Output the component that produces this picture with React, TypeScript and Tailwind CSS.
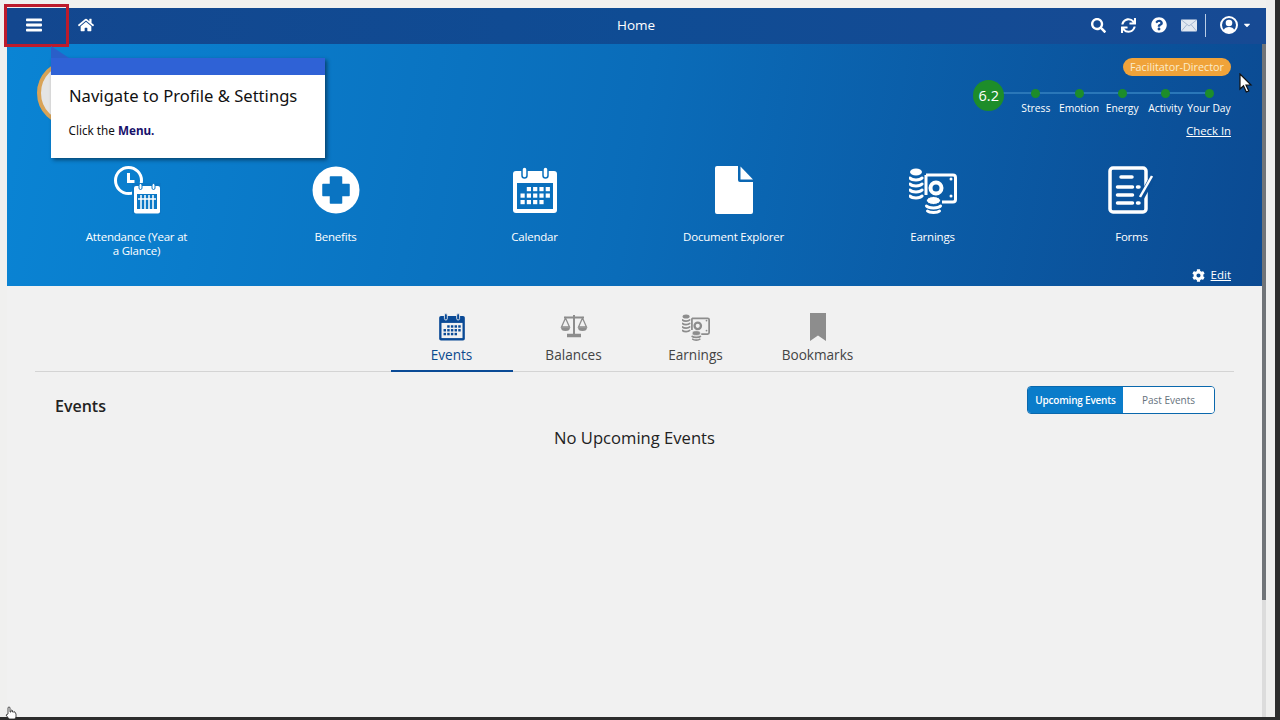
import React from "react";
import { FaHome, FaSearch, FaSync, FaQuestionCircle, FaCog, FaCaretDown } from "react-icons/fa";

const AttendanceIcon = () => (
  <svg width="48" height="48" viewBox="0 0 48 48" fill="none">
    <circle cx="15.500" cy="14.500" r="13" stroke="#fff" strokeWidth="3" />
    <path d="M15.500 7v8.500h6" stroke="#fff" strokeWidth="3" />
    <rect x="19" y="17" width="31" height="32" fill="#0b78c6" />
    <rect x="21" y="20" width="26" height="27.500" rx="2" fill="#fff" />
    <rect x="26" y="17.500" width="3" height="6" rx="1.500" fill="#fff" stroke="#0b78c6" />
    <rect x="39" y="17.500" width="3" height="6" rx="1.500" fill="#fff" stroke="#0b78c6" />
    <path d="M24 28h20v15H24z" fill="#0b78c6" />
    <path d="M25 33h18M28 29v14M32 29v14M36 29v14M40 29v14" stroke="#fff" strokeWidth="1.500" />
  </svg>
);
const BenefitsIcon = () => (
  <svg width="48" height="48" viewBox="0 0 48 48">
    <circle cx="24" cy="24" r="23.500" fill="#fff" />
    <path d="M18.500 11h11v7.500H37v11h-7.500V37h-11v-7.500H11v-11h7.500z" fill="#0a74c2" strokeLinejoin="round" stroke="#0a74c2" strokeWidth="1.500" />
  </svg>
);
const CalendarIcon = ({ fg = "#fff", bg = "#0a70bd", size = 48 }: { fg?: string; bg?: string; size?: number }) => (
  <svg width={size} height={size} viewBox="0 0 48 48">
    <rect x="2" y="5" width="44" height="42" rx="3" fill={fg} />
    <rect x="11" y="1" width="5" height="11" rx="2.500" fill={fg} stroke={bg} strokeWidth="1.500" />
    <rect x="32" y="1" width="5" height="11" rx="2.500" fill={fg} stroke={bg} strokeWidth="1.500" />
    <rect x="6" y="17" width="36" height="26" fill={bg} />
    {[0, 1, 2].map((r) =>
      [0, 1, 2, 3, 4].map((c) =>
        r === 0 && c === 0 ? null : r === 2 && c === 4 ? null : (
          <rect key={`${r}${c}`} x={9.500 + c * 6.300} y={21 + r * 6.500} width="4.200" height="4.200" fill={fg} />
        )
      )
    )}
  </svg>
);
const DocIcon = () => (
  <svg width="38" height="48" viewBox="0 0 38 48">
    <path d="M2 0h21v14a2 2 0 0 0 2 2h13v30a2 2 0 0 1-2 2H2a2 2 0 0 1-2-2V2a2 2 0 0 1 2-2z" fill="#fff" />
    <path d="M25.500 0.500 38 13.500H25.500z" fill="#fff" />
  </svg>
);
const EarningsIcon = ({ c = "#fff", bg = "#0a5aa6", w = 48 }: { c?: string; bg?: string; w?: number }) => (
  <svg width={w} height={w} viewBox="0 0 48 48" fill="none">
    <ellipse cx="7" cy="6" rx="6" ry="3.500" fill={c} />
    <path d="M1 12c2 2.500 10 2.500 12 0M1 18c2 2.500 10 2.500 12 0M1 24c2 2.500 10 2.500 12 0M1 30c2 2.500 10 2.500 12 0" stroke={c} strokeWidth="3" strokeLinecap="round" />
    <path d="M17 9h27a2.500 2.500 0 0 1 2.500 2.500v22a2.500 2.500 0 0 1-2.500 2.500h-11" stroke={c} strokeWidth="3" />
    <path d="M17 9v20" stroke={c} strokeWidth="3" />
    <circle cx="27" cy="22" r="5.500" stroke={c} strokeWidth="4" />
    <circle cx="42" cy="13" r="1.500" fill={c} />
    <circle cx="42" cy="30" r="1.500" fill={c} />
    <ellipse cx="24.500" cy="34.500" rx="7" ry="4" fill={c} stroke={bg} strokeWidth="1" />
    <path d="M17.500 40c2 2.500 12 2.500 14 0M18.500 45c2 2 10 2 12 0" stroke={c} strokeWidth="3" strokeLinecap="round" />
  </svg>
);
const FormsIcon = () => (
  <svg width="48" height="48" viewBox="0 0 48 48" fill="none">
    <rect x="2" y="2" width="36" height="44" rx="3" stroke="#fff" strokeWidth="3.500" />
    <path d="M13 11h11M9.500 21h15M9.500 29h15M9.500 37h15" stroke="#fff" strokeWidth="3.500" strokeLinecap="round" />
    <path d="M29.500 21h1.500M29.500 37h1.500" stroke="#fff" strokeWidth="3.500" strokeLinecap="round" />
    <path d="M33 32 46 9" stroke="#0a4f98" strokeWidth="6" />
    <path d="M32 31 44 10" stroke="#fff" strokeWidth="2.500" />
  </svg>
);
const ScaleIcon = () => (
  <svg width="28" height="26" viewBox="0 0 28 26" fill="none" stroke="#8d8d8d">
    <path d="M14 1v21M4 3.500h20" strokeWidth="2" />
    <path d="M7 21.500h14" strokeWidth="3.500" />
    <path d="M5.500 4 1.500 13h8zM22.500 4l-4 9h8z" strokeWidth="1.300" />
    <path d="M1 13.500a4.500 3.500 0 0 0 9 0zM18 13.500a4.500 3.500 0 0 0 9 0z" fill="#8d8d8d" stroke="none" />
  </svg>
);
const MailIcon = () => (
  <svg width="16" height="13" viewBox="0 0 16 13">
    <rect width="16" height="12" y="0.500" rx="1" fill="#e2e8f1" />
    <path d="M0.500 1 8 7l7.500-6M0.500 12 6 5.500M15.500 12 10 5.500" fill="none" stroke="#9fb2cf" strokeWidth="0.900" />
  </svg>
);
const UserIcon = () => (
  <svg width="18" height="18" viewBox="0 0 18 18">
    <circle cx="9" cy="9" r="8" fill="none" stroke="#fff" strokeWidth="2" />
    <circle cx="9" cy="7" r="3.300" fill="#fff" />
    <path d="M3.500 14.500c1-2.800 3-3.500 5.500-3.500s4.500.7 5.500 3.500a8 8 0 0 1-11 0z" fill="#fff" />
  </svg>
);

const shortcuts = [
  { label: "Attendance (Year at a Glance)", icon: <AttendanceIcon /> },
  { label: "Benefits", icon: <BenefitsIcon /> },
  { label: "Calendar", icon: <CalendarIcon /> },
  { label: "Document Explorer", icon: <DocIcon /> },
  { label: "Earnings", icon: <EarningsIcon /> },
  { label: "Forms", icon: <FormsIcon /> },
];

const steps = ["Stress", "Emotion", "Energy", "Activity", "Your Day"];

const tabs = [
  { label: "Events", active: true, icon: <CalendarIcon fg="#0a4a96" bg="#f1f1f1" size={28} /> },
  { label: "Balances", icon: <ScaleIcon /> },
  { label: "Earnings", icon: <EarningsIcon c="#8d8d8d" bg="#f1f1f1" w={28} /> },
  {
    label: "Bookmarks",
    icon: (
      <svg width="16" height="28" viewBox="0 0 16 28">
        <path d="M0 0h16v28l-8-5.500L0 28z" fill="#8d8d8d" />
      </svg>
    ),
  },
];

const Arrow = () => (
  <svg width="14" height="20" viewBox="0 0 14 20">
    <path d="M1 1v15l3.500-3.300L7.300 19l2.500-1-2.800-6h5z" fill="#fff" stroke="#111" strokeWidth="1.200" />
  </svg>
);

export default function App() {
  return (
    <div className="w-[1280px] h-[720px] overflow-hidden flex flex-col bg-[#f0f0ef] text-[#222] font-['Open_Sans','Noto_Sans',sans-serif]">
      <div className="h-[717px] flex">
        <div className="w-[7px] shrink-0 bg-[#f0f0ef]" />
        <div className="w-[1259px] shrink-0 flex flex-col relative">
          <div className="h-[8px] shrink-0 bg-[#f1f1ef]" />
          {/* top bar */}
          <header className="h-[36px] shrink-0 bg-gradient-to-r from-[#13478f] via-[#0f4c94] to-[#174a94] flex items-center pb-[2px] text-white relative">
            <div className="w-[54px] flex justify-center">
              <svg width="16" height="14" viewBox="0 0 16 14" fill="#fff">
                <rect y="0.500" width="16" height="2.800" rx="0.800" />
                <rect y="5.600" width="16" height="2.800" rx="0.800" />
                <rect y="10.700" width="16" height="2.800" rx="0.800" />
              </svg>
            </div>
            <FaHome className="ml-[17px] text-[16px]" />
            <div className="absolute left-[610px] top-[8px] text-[13.500px] leading-[18px] font-medium">Home</div>
            <div className="ml-auto flex items-center pr-[14px]">
              <FaSearch className="text-[15px] mr-[15px]" />
              <FaSync className="text-[15px] mr-[15px]" />
              <FaQuestionCircle className="text-[16px] mr-[14px]" />
              <div className="mr-[8px]"><MailIcon /></div>
              <div className="w-px h-[23px] bg-[#b9cde6] mr-[14px]" />
              <div className="mr-[4px]"><UserIcon /></div>
              <FaCaretDown className="text-[10px]" />
            </div>
          </header>

          {/* hero */}
          <section className="h-[242px] shrink-0 bg-[linear-gradient(100deg,#0a84d4,#0a6cb9_50%,#0b4a92)] text-white flex flex-col px-[30px] pt-[14px] relative">
            <div className="flex flex-col items-end h-[107px] pr-[5px]">
              <div className="h-[18px] rounded-full bg-[#f0a33a] px-[7px] text-[10.800px] leading-[18px] text-[#fbeccb]">
                Facilitator-Director
              </div>
              <div className="relative flex items-start mt-[3px] h-[36px]">
                <div className="absolute left-[30px] right-[20px] top-[13px] h-[2px] bg-[#2a77b8]" />
                <div className="relative w-[31px] h-[31px] mt-[1px] rounded-full bg-[#1d8d2a] text-[14.500px] leading-[31px] text-center mr-[10px]">
                  6.2
                </div>
                {steps.map((s, i) => (
                  <div key={s} className={`relative flex flex-col items-center ${i === 4 ? "w-[44px]" : "w-[43.200px]"}`}>
                    <div className="w-[9px] h-[9px] rounded-full bg-[#1d8d2a] mt-[9.500px]" />
                    <div className="text-[10.300px] leading-[14px] mt-[3.500px] whitespace-nowrap">{s}</div>
                  </div>
                ))}
              </div>
              <a className="text-[11.300px] leading-[16px] underline mt-[8px]">Check In</a>
            </div>

            <div className="grid grid-cols-6 w-[1194px] h-[93px]">
              {shortcuts.map((s) => (
                <div key={s.label} className="flex flex-col items-center">
                  <div className="h-[48px] mt-[1px] flex items-center justify-center">{s.icon}</div>
                  <div className="mt-[16px] w-[110px] text-center text-[11.500px] tracking-[-0.200px] leading-[14px] whitespace-normal">{s.label}</div>
                </div>
              ))}
            </div>
            <div className="flex justify-end items-center pr-[5px] mt-[9px]">
              <FaCog className="text-[13px] mr-[6px]" />
              <a className="text-[11.500px] leading-[16px] underline">Edit</a>
            </div>
            {/* avatar peeking out behind the tooltip */}
            <div className="absolute left-[30px] top-[16px] w-[66px] h-[66px] rounded-full bg-[#e4e4e4] border-[4px] border-[#d9a357]" />
          </section>

          {/* content */}
          <main className="flex-1 bg-[#f1f1f1] px-[28px]">
            <div className="mt-[27px] h-[59px] border-b border-[#d4d4d4] flex justify-center w-[1199px]">
              {tabs.map((t) => (
                <div
                  key={t.label}
                  className={`w-[122px] h-[59px] flex flex-col items-center ${t.active ? "border-b-2 border-[#0a4a96]" : ""}`}
                >
                  <div className="h-[28px] flex items-center justify-center">{t.icon}</div>
                  <div className={`mt-[4px] text-[13.600px] leading-[20px] ${t.active ? "text-[#0a4a8e]" : "text-[#444]"}`}>{t.label}</div>
                </div>
              ))}
            </div>
            <div className="flex items-start justify-between mt-[14px] pl-[20px] pr-[19px] w-[1199px]">
              <h2 className="mt-[9px] text-[16px] leading-[22px] font-semibold text-[#222]">Events</h2>
              <div className="flex h-[28px] w-[188px] rounded-[4px] border border-[#0a68ad] overflow-hidden text-[10px] leading-[26px] text-center">
                <div className="w-[95px] bg-[#0a7cca] text-white font-semibold tracking-[-0.200px]">Upcoming Events</div>
                <div className="flex-1 bg-white text-[#66727d]">Past Events</div>
              </div>
            </div>
            <div className="w-[1199px] text-center mt-[10px] text-[16.600px] leading-[22px] text-[#222]">No Upcoming Events</div>
          </main>

          {/* scrollbar */}
          <div className="absolute right-0 top-[44px] w-[4px] h-[556px] bg-[#707478]" />
          <div className="absolute right-0 top-[600px] bottom-0 w-[4px] bg-[#dcdcdc]" />

          {/* red highlight around the menu button */}
          <div className="absolute left-[-3px] top-[4px] w-[65px] h-[43px] border-[3px] border-[#bd1b2c]" />

          {/* tutorial tooltip */}
          <div className="absolute left-[44px] top-[58px] w-[274px] h-[100px] bg-white shadow-[2px_2px_4px_rgba(0,0,0,0.45)] font-['Noto_Sans','DejaVu_Sans',sans-serif]">
            <svg className="absolute left-0 -top-[12px]" width="18" height="12" viewBox="0 0 18 12">
              <path d="M0 0 18 12H0z" fill="#2a5fc9" />
            </svg>
            <div className="h-[17px] bg-[#2f62d6]" />
            <div className="pl-[18px] pt-[8.500px] text-[16.600px] leading-[24px] text-[#111]">Navigate to Profile &amp; Settings</div>
            <div className="pl-[17.500px] mt-[13.500px] text-[11.700px] leading-[18px] text-[#111]">
              Click the <b className="text-[#17116b] font-bold">Menu.</b>
            </div>
          </div>
        </div>
        <div className="flex-1 bg-[#efefee] border-r-[5px] border-[#2d2d2d]" />
      </div>
      <div className="h-[3px] bg-[#2d2d2d]" />

      {/* mouse pointers captured in the recording */}
      <div className="absolute left-[1239px] top-[73px]"><Arrow /></div>
      <svg className="absolute left-[5px] top-[706px]" width="12" height="14" viewBox="0 0 12 14">
        <path d="M3 8V2a1 1 0 0 1 2 0v4h1V4.500a1 1 0 0 1 1.500 0V6H8.500a1 1 0 0 1 1.500 0v1a1 1 0 0 1 1 1v3l-1 2H4L1 9z" fill="#fff" stroke="#222" strokeWidth="0.800" />
      </svg>
    </div>
  );
}
